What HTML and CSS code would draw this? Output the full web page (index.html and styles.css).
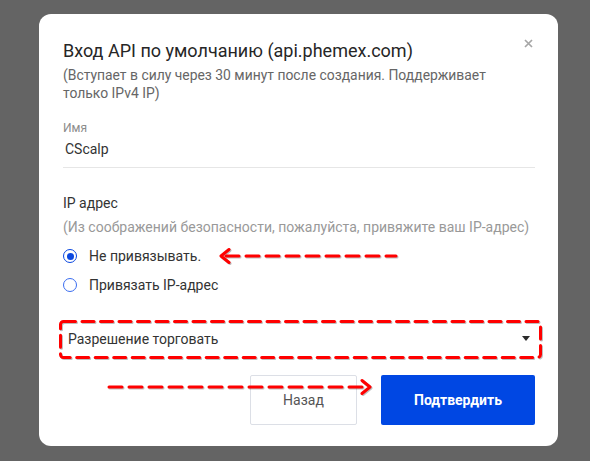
FILE: index.html
```html
<!DOCTYPE html>
<html lang="ru">
<head>
<meta charset="utf-8">
<title>API</title>
<link rel="stylesheet" href="styles.css">
</head>
<body>
<div class="modal">
  <button class="close" aria-label="close">
    <svg width="9" height="9" viewBox="0 0 9 9"><path d="M1 1L8 8M8 1L1 8" stroke="#a6a6a6" stroke-width="1.7" fill="none"/></svg>
  </button>
  <h1 class="title">Вход API по умолчанию (api.phemex.com)</h1>
  <p class="subtitle">(Вступает в силу через 30 минут после создания. Поддерживает только IPv4 IP)</p>
  <div class="field">
    <div class="field-label">Имя</div>
    <div class="field-value">CScalp</div>
  </div>
  <div class="section-title">IP адрес</div>
  <div class="section-hint">(Из соображений безопасности, пожалуйста, привяжите ваш IP-адрес)</div>
  <div class="radios">
    <label class="radio"><span class="dot checked"></span><span>Не привязывать.</span></label>
    <label class="radio"><span class="dot"></span><span>Привязать IP-адрес</span></label>
  </div>
  <div class="select">
    <span>Разрешение торговать</span>
    <svg class="caret" width="8" height="5" viewBox="0 0 8 5"><path d="M0 0H8L4 5Z" fill="#2b2b2b"/></svg>
  </div>
  <div class="actions">
    <button class="btn btn-back">Назад</button>
    <button class="btn btn-primary">Подтвердить</button>
  </div>
</div>
<svg class="marks" width="590" height="461" viewBox="0 0 590 461">
  <g class="red" fill="none" stroke="#ff0000" stroke-width="3" stroke-linecap="round" stroke-linejoin="round">
    <line x1="226" y1="256" x2="396" y2="256" stroke-dasharray="13 7"/>
    <polyline points="229,249.5 221,256 229,262.5"/>
    <line x1="109" y1="387" x2="366" y2="387" stroke-dasharray="13 7"/>
    <polyline points="362,380.5 370,387 362,393.5"/>
    <rect x="60.5" y="321.5" width="480" height="36" rx="3" stroke-dasharray="12 6.5"/>
  </g>
</svg>
</body>
</html>
```

FILE: styles.css
```css
html, body {
  margin: 0;
  padding: 0;
}
body {
  background: #646464;
  width: 590px;
  height: 461px;
  position: relative;
  overflow: hidden;
  font-family: Roboto, "Noto Sans", sans-serif;
  padding-top: 14px;
  box-sizing: border-box;
}
.modal {
  position: relative;
  margin-left: 39px;
  width: 519px;
  box-sizing: border-box;
  background: #fff;
  border-radius: 12px;
  padding: 25px 23px 21px 24px;
}
.close {
  position: absolute;
  top: 25px;
  right: 25px;
  border: 0;
  background: none;
  padding: 0;
  width: 9px;
  height: 9px;
  display: block;
}
.close svg { display: block; }
.title {
  margin: 0;
  font-size: 18px;
  line-height: 24px;
  font-weight: 400;
  color: #262626;
}
.subtitle {
  margin: 3px 0 0;
  font-size: 13.9px;
  line-height: 18px;
  color: #666;
  width: 450px;
}
.field {
  margin-top: 18px;
  border-bottom: 1px solid #e6e6e6;
  padding-bottom: 8px;
}
.field-label {
  font-size: 12px;
  line-height: 16px;
  color: #8c8c8c;
}
.field-value {
  margin-top: 3px;
  padding-left: 2px;
  font-size: 14px;
  line-height: 20px;
  color: #333;
}
.section-title {
  margin-top: 25px;
  font-size: 14px;
  line-height: 20px;
  color: #333;
}
.section-hint {
  margin-top: 4px;
  font-size: 14px;
  line-height: 20px;
  color: #999;
}
.radios {
  margin-top: 9px;
  display: flex;
  flex-direction: column;
  gap: 9px;
}
.radio {
  display: flex;
  align-items: center;
  height: 20px;
  font-size: 14px;
  color: #333;
}
.dot {
  width: 14px;
  height: 14px;
  box-sizing: border-box;
  border: 1.5px solid #3a6df0;
  border-radius: 50%;
  margin-right: 12px;
  position: relative;
  flex: none;
}
.dot.checked {
  border: 1px solid #0a47e0;
}
.dot.checked::after {
  content: "";
  position: absolute;
  left: 2.5px;
  top: 2.5px;
  width: 7px;
  height: 7px;
  border-radius: 50%;
  background: #0a47e0;
}
.select {
  margin-top: 26px;
  height: 36px;
  display: flex;
  align-items: center;
  justify-content: space-between;
  padding: 0 5px 0 5px;
  font-size: 14px;
  color: #333;
}
.caret { display: block; margin-top: -2px; }
.actions {
  margin-top: 18px;
  display: flex;
  justify-content: flex-end;
  gap: 24px;
}
.btn {
  height: 50px;
  font-family: Roboto, "Noto Sans", sans-serif;
  font-size: 14px;
  border-radius: 2px;
  padding: 0;
}
.btn-back {
  width: 107px;
  background: #fff;
  border: 1px solid #dcdfe6;
  color: #555;
}
.btn-primary {
  width: 154px;
  background: #0047e3;
  border: 0;
  color: #fff;
  font-weight: 700;
}
.marks {
  position: absolute;
  left: 0;
  top: 0;
  pointer-events: none;
}
.red {
  filter: drop-shadow(1px 1px 0.5px rgba(0, 0, 0, 0.25));
}
```
